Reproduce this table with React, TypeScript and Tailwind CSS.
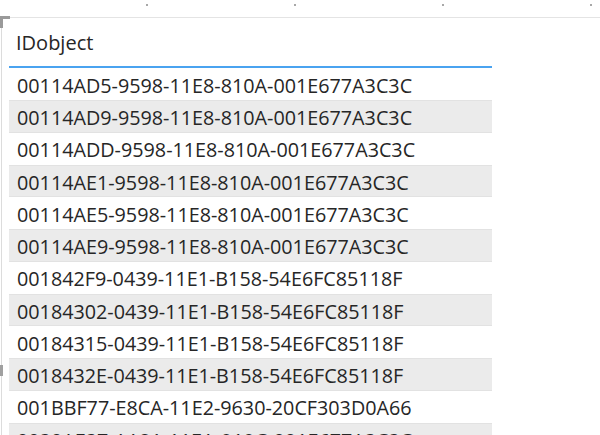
import React from 'react';

const ids = [
  '00114AD5-9598-11E8-810A-001E677A3C3C',
  '00114AD9-9598-11E8-810A-001E677A3C3C',
  '00114ADD-9598-11E8-810A-001E677A3C3C',
  '00114AE1-9598-11E8-810A-001E677A3C3C',
  '00114AE5-9598-11E8-810A-001E677A3C3C',
  '00114AE9-9598-11E8-810A-001E677A3C3C',
  '001842F9-0439-11E1-B158-54E6FC85118F',
  '00184302-0439-11E1-B158-54E6FC85118F',
  '00184315-0439-11E1-B158-54E6FC85118F',
  '0018432E-0439-11E1-B158-54E6FC85118F',
  '001BBF77-E8CA-11E2-9630-20CF303D0A66',
  '0030AE37-AA21-11EA-919C-001E677A3C3C',
];

const font = { fontFamily: '"Open Sans", "Noto Sans", sans-serif' };

// top strip with the little grid dots
const TopStrip: React.FC = () => (
  <div className="h-[18px] border-b border-[#e4e4e4]">
    <div className="grid grid-cols-4 w-[592px]">
      {[0, 1, 2, 3].map(i => (
        <div key={i} className="flex justify-end pt-[4px]">
          <div className="w-[2px] h-[2px] bg-[#a8a8a8]" />
        </div>
      ))}
    </div>
  </div>
);

const Gutter: React.FC = () => (
  <div className="w-[9px] flex flex-col shrink-0">
    <div className="w-[10px] h-[3px] bg-[#9a9a9a] -mt-[2px]" />
    <div className="w-[3px] h-[9px] bg-[#9a9a9a]" />
    <div className="ml-[1px] w-[1px] h-[337px] bg-[#dcdcdc]" />
    <div className="w-[3px] h-[11px] bg-[#a0a0a0]" />
    <div className="ml-[1px] w-[1px] flex-1 bg-[#dcdcdc]" />
  </div>
);

export default function App() {
  return (
    <div className="w-[600px] h-[435px] overflow-hidden bg-white text-[#262626]" style={font}>
      <TopStrip />
      <div className="flex">
        <Gutter />
        <div className="w-[483px]">
          <div className="h-[48px] flex items-center pl-[7px] text-[20px] pt-[1px]">IDobject</div>
          <div className="h-[2px] bg-[#4aa3f0]" />
          {ids.map((id, i) => (
            <div
              key={id}
              className={`h-[32.25px] flex items-center pl-[8px] pt-[3px] text-[19.75px] whitespace-nowrap ${
                i % 2 === 1 ? 'bg-[#ebebeb] border-y border-[#e2e2e2]' : ''
              }`}
            >
              {id}
            </div>
          ))}
        </div>
      </div>
    </div>
  );
}
